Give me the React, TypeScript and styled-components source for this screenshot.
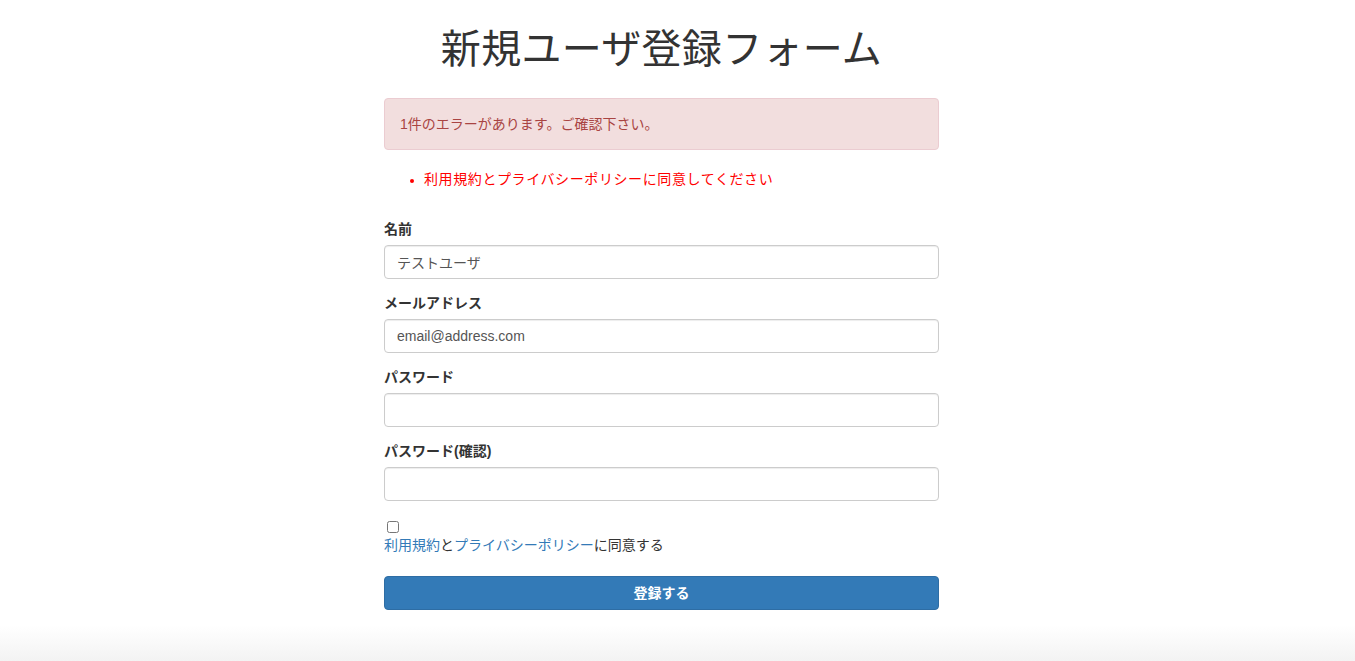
import React from "react"
import styled, { createGlobalStyle } from "styled-components"

const GlobalStyle = createGlobalStyle`
  html, body {
    margin: 0;
    padding: 0;
  }
  body {
    font-family: "Liberation Sans", "Noto Sans CJK JP", sans-serif;
    font-size: 14px;
    line-height: 20px;
    color: #333;
    background: #fff;
  }
  * {
    box-sizing: border-box;
  }
`;

export default function App() {
  return (
    <Page>
      <GlobalStyle />
      <Column>
        <Title>新規ユーザ登録フォーム</Title>
        <Alert>1件のエラーがあります。ご確認下さい。</Alert>
        <ErrorList>
          <li>利用規約とプライバシーポリシーに同意してください</li>
        </ErrorList>

        <FormGroup>
          <Label>名前</Label>
          <Input type="text" defaultValue="テストユーザ" />
        </FormGroup>
        <FormGroup>
          <Label>メールアドレス</Label>
          <Input type="email" defaultValue="email@address.com" />
        </FormGroup>
        <FormGroup>
          <Label>パスワード</Label>
          <Input type="password" />
        </FormGroup>
        <FormGroup>
          <Label>パスワード(確認)</Label>
          <Input type="password" />
        </FormGroup>

        <CheckRow>
          <CheckBox type="checkbox" />
        </CheckRow>
        <AgreeText>
          <Link href="#">利用規約</Link>と<Link href="#">プライバシーポリシー</Link>に同意する
        </AgreeText>

        <SubmitButton type="button">登録する</SubmitButton>
      </Column>
    </Page>
  )
}

const Page = styled.div`
  min-height: 100vh;
  overflow: hidden;
  background: linear-gradient(
    to bottom,
    #ffffff 0,
    #ffffff calc(100% - 36px),
    #f3f3f3 100%
  );
`;

const Column = styled.div`
  width: 555px;
  margin-left: calc(50% - 293.5px);
  padding-bottom: 50px;
`;

const Title = styled.h1`
  margin: 24px -40px 30px;
  font-size: 40px;
  line-height: 44px;
  font-weight: 400;
  text-align: center;
  color: #333;
  font-family: "Noto Sans CJK JP", "Liberation Sans", sans-serif;
  letter-spacing: 0.3px;
`;

const Alert = styled.div`
  padding: 15px;
  border: 1px solid #ebccd1;
  border-radius: 4px;
  background: #f2dede;
  color: #a94442;
  line-height: 20px;
`;

const ErrorList = styled.ul`
  margin: 19px 0 30px;
  padding-left: 40px;
  color: #ff0000;
  line-height: 20px;
  letter-spacing: 0.6px;

  li::marker {
    font-size: 12px;
  }
`;

const FormGroup = styled.div`
  margin-bottom: 14px;
`;

const Label = styled.label`
  display: block;
  margin-bottom: 6px;
  font-weight: 700;
  line-height: 20px;
`;

const Input = styled.input`
  display: block;
  width: 100%;
  height: 34px;
  padding: 6px 12px;
  border: 1px solid #ccc;
  border-radius: 4px;
  box-shadow: inset 0 1px 1px rgba(0, 0, 0, 0.075);
  font-family: "Liberation Sans", "Noto Sans CJK JP", sans-serif;
  font-size: 14px;
  color: #555;
  background: #fff;
  outline: none;
`;

const CheckRow = styled.div`
  margin-top: 20px;
  height: 14px;
  padding-left: 3px;
`;

const CheckBox = styled.input`
  margin: 0;
  width: 12px;
  height: 12px;
  vertical-align: top;
`;

const AgreeText = styled.div`
  line-height: 20px;
  margin-bottom: 21px;
`;

const Link = styled.a`
  color: #337ab7;
  text-decoration: none;
`;

const SubmitButton = styled.button`
  display: block;
  width: 100%;
  height: 34px;
  padding: 5px 12px 7px;
  border: 1px solid #2e6da4;
  border-radius: 4px;
  background: #337ab7;
  color: #fff;
  font-family: "Liberation Sans", "Noto Sans CJK JP", sans-serif;
  font-size: 14px;
  font-weight: 700;
  cursor: pointer;
`;
